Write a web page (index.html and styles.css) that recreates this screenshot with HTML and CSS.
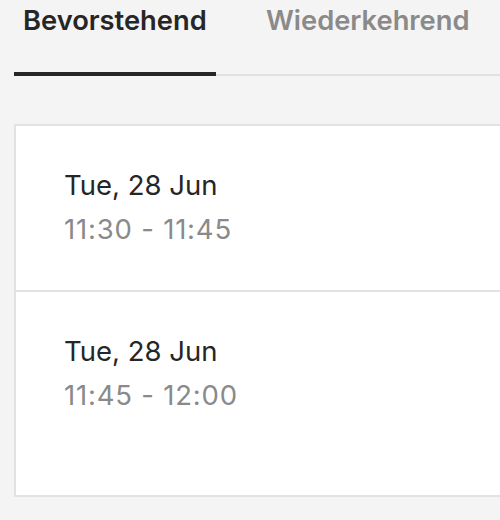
FILE: index.html
```html
<!DOCTYPE html>
<html lang="de">
<head>
<meta charset="utf-8">
<title>Termine</title>
<link rel="stylesheet" href="styles.css">
</head>
<body>
<div class="page">
  <nav class="tabs">
    <div class="tab tab-active">Bevorstehend</div>
    <div class="tab">Wiederkehrend</div>
  </nav>
  <div class="card">
    <div class="slot">
      <div class="slot-date">Tue, 28 Jun</div>
      <div class="slot-time">11:30 - 11:45</div>
    </div>
    <div class="slot slot-last">
      <div class="slot-date">Tue, 28 Jun</div>
      <div class="slot-time">11:45 - 12:00</div>
    </div>
  </div>
</div>
</body>
</html>
```
FILE: styles.css
```css
html, body {
  margin: 0;
  padding: 0;
  background: #f4f4f4;
  overflow: hidden;
}
.page {
  width: 500px;
  height: 520px;
  padding-left: 14px;
  box-sizing: border-box;
  font-family: Inter, "Noto Sans", sans-serif;
  overflow: hidden;
}
.tabs {
  display: flex;
  border-bottom: 2px solid #e2e2e2;
  height: 74px;
  margin-right: -20px;
}
.tab {
  font-size: 27.3px;
  font-weight: 600;
  line-height: 40px;
  color: #8a8a8a;
  padding: 1px 9px 0;
  margin-right: 41px;
  box-sizing: border-box;
  height: 76px;
}
.tab-active {
  color: #262626;
  width: 202px;
  border-bottom: 4px solid #262626;
}
.card {
  margin-top: 48px;
  background: #fff;
  border: 2px solid #e2e2e2;
  border-right: none;
  margin-right: -20px;
  border-radius: 2px 0 0 2px;
}
.slot {
  padding: 39px 0 41px 48px;
  border-bottom: 2px solid #e2e2e2;
}
.slot-last {
  border-bottom: none;
  padding-bottom: 80px;
}
.slot-date {
  font-size: 27.5px;
  line-height: 40px;
  color: #262626;
}
.slot-time {
  font-size: 27.5px;
  line-height: 40px;
  color: #8a8a8a;
  margin-top: 4px;
  letter-spacing: 0.8px;
}
```
